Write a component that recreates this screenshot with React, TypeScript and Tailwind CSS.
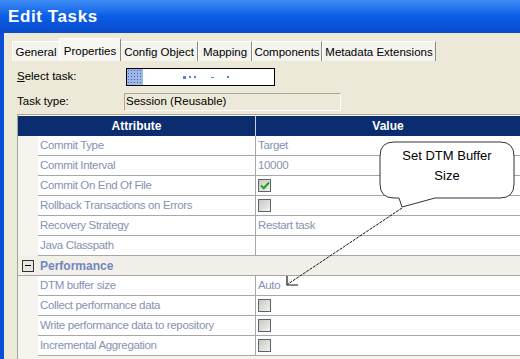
import React from "react";

const rows: { name: string; value?: string; check?: "on" | "off"; group?: boolean }[] = [
  { name: "Commit Type", value: "Target" },
  { name: "Commit Interval", value: "10000" },
  { name: "Commit On End Of File", check: "on" },
  { name: "Rollback Transactions on Errors", check: "off" },
  { name: "Recovery Strategy", value: "Restart task" },
  { name: "Java Classpath", value: "" },
  { name: "Performance", group: true },
  { name: "DTM buffer size", value: "Auto" },
  { name: "Collect performance data", check: "off" },
  { name: "Write performance data to repository", check: "off" },
  { name: "Incremental Aggregation", check: "off" },
];

const tabs = [
  { label: "General", w: "w-[48px]" },
  { label: "Properties", w: "w-[62px]", active: true },
  { label: "Config Object", w: "w-[78px]" },
  { label: "Mapping", w: "w-[54px]" },
  { label: "Components", w: "w-[70px]" },
  { label: "Metadata Extensions", w: "w-[114px]" },
];

const CheckBox = ({ on }: { on: boolean }) => (
  <div className="w-[13px] h-[13px] border border-[#5a6470] bg-gradient-to-br from-[#c8c8c0] to-[#f4f4f0] flex items-center justify-center">
    {on && (
      <svg width="10" height="9" viewBox="0 0 10 9">
        <path d="M1 4.5 L3.8 7.2 L9 1.5" stroke="#22a022" strokeWidth="2" fill="none" />
      </svg>
    )}
  </div>
);

const App = () => {
  return (
    <div
      className="relative w-[520px] h-[359px] overflow-hidden bg-[#ece9d8] text-black"
      style={{ fontFamily: '"Liberation Sans", Arial, sans-serif' }}
    >
      {/* title bar */}
      <div className="h-[33px] flex items-center pl-[8px] bg-gradient-to-b from-[#3f8df5] via-[#0a5ce6] to-[#0a4ccc]">
        <span className="text-white font-bold text-[17px] tracking-[0.6px]">Edit Tasks</span>
      </div>

      <div className="h-[326px] border-l-[4px] border-[#0b4fd4] flex flex-col">
        {/* tabs */}
        <div className="h-[28px] pl-[8px] flex items-end">
          {tabs.map((t) =>
            t.active ? (
              <div
                key={t.label}
                className={`${t.w} h-[23px] -mx-[1px] relative z-10 bg-[#f7f6f0] border-t border-l border-white border-r border-r-[#8c8a80] rounded-t-[2px] flex items-start pt-[4px] justify-center text-[11.5px]`}
              >
                {t.label}
              </div>
            ) : (
              <div
                key={t.label}
                className={`${t.w} h-[20px] bg-[#f4f3ee] border-t border-l border-white border-r border-r-[#8c8a80] flex items-center justify-center text-[11.5px] pt-[2px]`}
              >
                {t.label}
              </div>
            )
          )}
        </div>

        {/* select task */}
        <div className="mt-[7px] h-[18px] flex items-center text-[11.5px]">
          <span className="w-[122px] shrink-0 pl-[13px]">
            <span className="underline">S</span>elect task:
          </span>
          <div className="w-[149px] h-[18px] bg-white border border-black flex items-center">
            <div className="w-[16px] h-[16px] bg-[radial-gradient(circle,#3a63c8_1px,#9fb6e6_1px)] bg-[length:3px_3px]" />
            <div className="flex-1 flex items-center gap-[3px] pl-[40px]">
              <span className="w-[3px] h-[3px] bg-[#5b7ed0]" />
              <span className="w-[2px] h-[2px] bg-[#5b7ed0]" />
              <span className="w-[2px] h-[2px] bg-[#5b7ed0]" />
              <span className="w-[3px] h-[1px] bg-[#5b7ed0] ml-[12px]" />
              <span className="w-[2px] h-[2px] bg-[#5b7ed0] ml-[10px]" />
            </div>
          </div>
        </div>

        {/* task type */}
        <div className="mt-[7px] h-[18px] flex items-center text-[11.5px]">
          <span className="w-[120px] shrink-0 pl-[13px]">Task type:</span>
          <div className="w-[217px] h-[18px] border border-t-[#aca899] border-l-[#aca899] border-b-white border-r-white flex items-center pl-[1px]">
            Session (Reusable)
          </div>
        </div>

        {/* property grid */}
        <div className="mt-[3px] ml-[13px] flex-1 border-t border-l border-[#a8a69c] bg-[#f5f4ee] flex flex-col">
          <div className="h-[20px] mt-[1px] flex bg-[#0b2d70] text-white font-bold text-[12px]">
            <div className="w-[238px] flex items-center justify-center border-r border-[#c8cedc]">Attribute</div>
            <div className="flex-1 flex items-center justify-center">Value</div>
          </div>
          {rows.map((r) =>
            r.group ? (
              <div key={r.name} className="h-[20px] flex items-center bg-[#f2f0e8] border-b border-[#a7a7a7]">
                <div className="w-[20px] flex items-center justify-center">
                  <div className="w-[12px] h-[12px] border border-[#333] bg-[#e8e6de] flex items-center justify-center">
                    <div className="w-[6px] h-[1px] bg-black" />
                  </div>
                </div>
                <span className="pl-[2px] font-bold text-[#6f87c2] text-[12px]">{r.name}</span>
              </div>
            ) : (
              <div key={r.name} className="h-[20px] flex">
                <div className="w-[20px]" />
                <div className="flex-1 flex bg-white border-b border-[#a7a7a7] text-[#8692b2] text-[11.5px] tracking-[-0.35px]">
                  <div className="w-[218px] pl-[2px] flex items-center border-r border-[#a7a7a7]">{r.name}</div>
                  <div className="flex-1 pl-[2px] flex items-center">
                    {r.check ? <CheckBox on={r.check === "on"} /> : r.value}
                  </div>
                </div>
              </div>
            )
          )}
        </div>
      </div>

      {/* callout annotation */}
      <svg className="absolute left-0 top-0 pointer-events-none" width="520" height="359">
        <path
          d="M394 142 H500 Q514 142 514 156 V184 Q514 198 500 198 H435 L402 207 L399 198 H394 Q380 198 380 184 V156 Q380 142 394 142 Z"
          fill="white"
          stroke="#333"
          strokeWidth="1"
        />
        <line x1="402" y1="208" x2="288" y2="284" stroke="#111" strokeWidth="1" strokeDasharray="3 1" />
        <path d="M287 276 V285 H298" stroke="#111" strokeWidth="1.2" fill="none" />
      </svg>
      <div className="absolute left-[380px] top-[146px] w-[134px] text-center text-[13px] leading-[20px] text-black">
        Set DTM Buffer
        <br />
        Size
      </div>
    </div>
  );
};

export default App;
